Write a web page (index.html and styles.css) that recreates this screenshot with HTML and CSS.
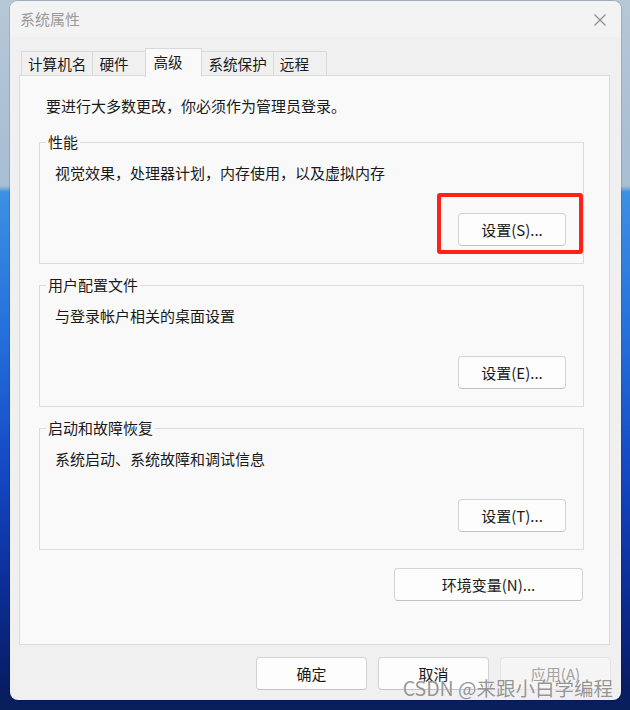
FILE: index.html
```html
<!DOCTYPE html>
<html lang="zh-CN">
  <head>
    <meta charset="UTF-8" />
    <meta name="viewport" content="width=device-width, initial-scale=1.0" />
    <title>系统属性</title>
    <link rel="stylesheet" href="styles.css">
  </head>
  <body>
    <div class="window">
      <div class="titlebar">
        <span class="title">系统属性</span>
        <span class="close">
          <svg width="12" height="12" viewBox="0 0 12 12">
            <path d="M0.5 0.5 L11.5 11.5 M11.5 0.5 L0.5 11.5" stroke="#8a8a8a" stroke-width="1.1" fill="none" />
          </svg>
        </span>
      </div>

      <div class="tabs">
        <span class="tab">计算机名</span>
        <span class="tab">硬件</span>
        <span class="tab active">高级</span>
        <span class="tab">系统保护</span>
        <span class="tab">远程</span>
      </div>

      <div class="panel">
        <p class="intro">要进行大多数更改，你必须作为管理员登录。</p>

        <fieldset class="group">
          <legend>性能</legend>
          <p class="desc">视觉效果，处理器计划，内存使用，以及虚拟内存</p>
          <div class="row"><button class="btn">设置(S)...</button></div>
          <span class="mark"></span>
        </fieldset>

        <fieldset class="group">
          <legend>用户配置文件</legend>
          <p class="desc">与登录帐户相关的桌面设置</p>
          <div class="row"><button class="btn">设置(E)...</button></div>
        </fieldset>

        <fieldset class="group">
          <legend>启动和故障恢复</legend>
          <p class="desc">系统启动、系统故障和调试信息</p>
          <div class="row"><button class="btn">设置(T)...</button></div>
        </fieldset>

        <div class="row">
          <button class="btn env">环境变量(N)...</button>
        </div>
      </div>

      <div class="footer">
        <button class="btn wide">确定</button>
        <button class="btn wide">取消</button>
        <button class="btn wide" disabled>应用(A)</button>
      </div>

      <span class="watermark">CSDN @来跟小白学编程</span>
    </div>
  </body>
</html>
```

FILE: styles.css
```css
html {
  font-family: "Noto Sans CJK SC", "Noto Sans", sans-serif;
}

body {
  margin: 0;
  width: 630px;
  height: 710px;
  overflow: hidden;
  background: linear-gradient(180deg, #b6c7d6 0, #a7bdd2 186px, #3c90e2 192px, #2571dc 330px, #1448c4 470px, #0c2f9a 580px, #081c62 690px, #0a1f5c 710px);
}

.window {
  position: relative;
  box-sizing: border-box;
  width: 611px;
  height: 699px;
  margin: 1px 0 0 10px;
  display: flex;
  flex-direction: column;
  background-color: #f0f0f0;
  border-radius: 8px;
  box-shadow: 0 0 0 1px rgba(0, 0, 0, 0.12);
  color: #1a1a1a;
  font-size: 15px;
  line-height: 18px;
}

.titlebar {
  height: 36px;
  display: flex;
  align-items: center;
  justify-content: space-between;
  padding: 0 15px 0 10px;
  background-color: #f3f3f3;
  border-radius: 8px 8px 0 0;
}

.title {
  font-size: 15px;
  color: #9a9a9a;
}

.close {
  display: flex;
  margin-top: 1px;
}

.tabs {
  height: 27px;
  display: flex;
  align-items: flex-end;
  margin: 11px 0 0 11px;
  font-size: 14.6px;
}

.tab {
  box-sizing: border-box;
  height: 24px;
  min-width: 54px;
  padding: 0 6px;
  display: flex;
  align-items: center;
  border: 1px solid #d9d9d9;
  border-bottom: none;
  margin-left: -1px;
  background-color: #f0f0f0;
}

.tab:first-child {
  margin-left: 0;
}

.tab.active {
  position: relative;
  z-index: 1;
  height: 29px;
  min-width: 57px;
  padding: 0 7px 3px;
  margin-bottom: -2px;
  background-color: #f9f9f9;
}

.panel {
  box-sizing: border-box;
  height: 570px;
  margin: 0 11px 0 9px;
  padding: 21px 25px 0 19px;
  background-color: #f9f9f9;
  border: 1px solid #dcdcdc;
}

.intro {
  margin: 0 0 18px 7px;
}

.group {
  position: relative;
  margin: 0 0 12px;
  padding: 13px 17px 17px 15px;
  border: 1px solid #dcdcdc;
  min-width: 0;
}

.group legend {
  padding: 0 2px;
  margin-left: -9px;
}

.desc {
  margin: 0 0 31px;
}

.row {
  display: flex;
  justify-content: flex-end;
}

.btn {
  box-sizing: border-box;
  width: 108px;
  height: 33px;
  padding: 0;
  font-family: inherit;
  font-size: 15px;
  color: #1a1a1a;
  background-color: #fdfdfd;
  border: 1px solid #d3d3d3;
  border-bottom-color: #c2c2c2;
  border-radius: 4px;
}

.btn.env {
  width: 189px;
  margin: 6px 1px 0 0;
}

.btn.wide {
  width: 111px;
  height: 33px;
}

.btn:disabled {
  color: #a3a3a3;
  background-color: #f5f5f5;
  border-color: #e3e3e3;
}

.mark {
  position: absolute;
  left: 397px;
  top: 42px;
  width: 146px;
  height: 61px;
  box-sizing: border-box;
  border: 4px solid #ff2218;
  border-radius: 3px;
}

.footer {
  display: flex;
  justify-content: flex-end;
  gap: 11px;
  padding: 12px 10px 10px;
}

.watermark {
  position: absolute;
  right: 8px;
  bottom: 1px;
  font-size: 19.5px;
  line-height: 22px;
  color: rgba(120, 120, 120, 0.8);
  text-shadow: 0 0 1px #fff;
  pointer-events: none;
}
```
